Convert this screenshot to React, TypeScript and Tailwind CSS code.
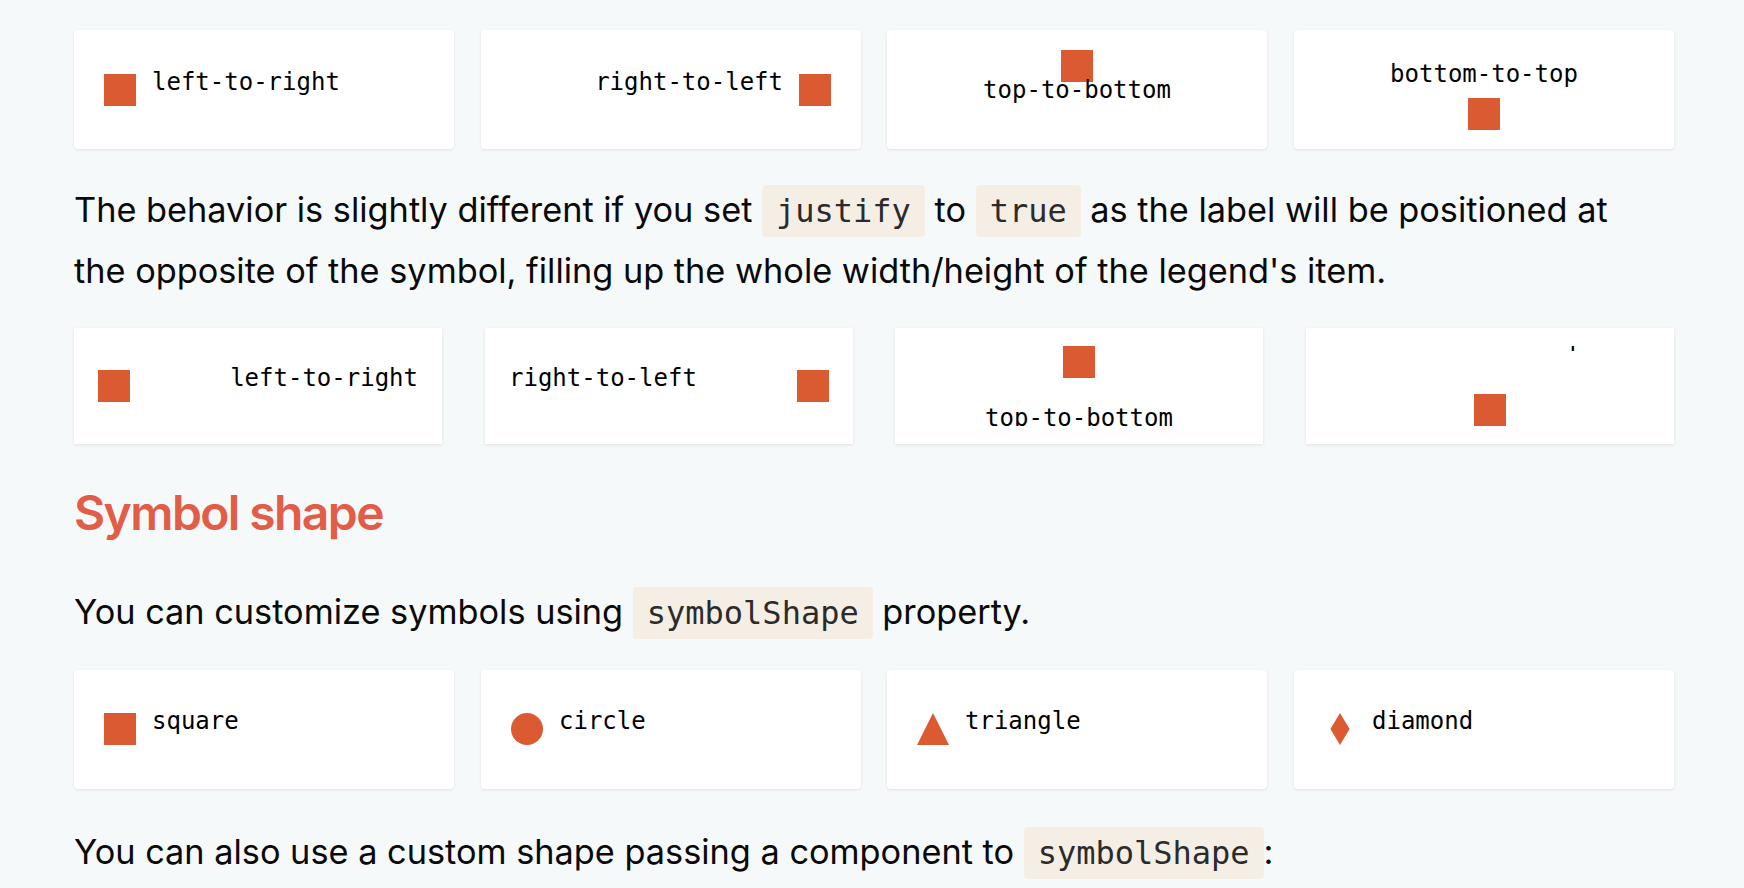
import React from 'react';

const C = '#dc5a32';
const MONO = '"DejaVu Sans Mono", "Liberation Mono", monospace';

type Shape = 'square' | 'circle' | 'triangle' | 'diamond';

function Sym({ shape, x, y }: { shape: Shape; x: number; y: number }) {
  if (shape === 'circle') return <circle cx={x + 16} cy={y + 16} r={16} fill={C} />;
  if (shape === 'triangle')
    return <path d={`M${x + 16} ${y} L${x + 32} ${y + 32} L${x} ${y + 32} Z`} fill={C} />;
  if (shape === 'diamond')
    return (
      <path
        d={`M${x + 16} ${y} L${x + 25.6} ${y + 16} L${x + 16} ${y + 32} L${x + 6.4} ${y + 16} Z`}
        fill={C}
      />
    );
  return <rect x={x} y={y} width={32} height={32} fill={C} />;
}

function Label({
  x,
  y,
  anchor,
  children,
}: {
  x: number;
  y: number;
  anchor: 'start' | 'middle' | 'end';
  children: React.ReactNode;
}) {
  return (
    <text x={x} y={y} textAnchor={anchor} fontSize={24} fontFamily={MONO} fill="#000">
      {children}
    </text>
  );
}

type Demo = {
  label: string;
  dir: 'ltr' | 'rtl' | 'ttb' | 'btt';
  justify?: boolean;
  shape?: Shape;
};

function LegendSvg({ label, dir, justify, shape = 'square' }: Demo) {
  let sym = { x: 0, y: 24 };
  let txt: { x: number; y: number; anchor: 'start' | 'middle' | 'end' } = { x: 48, y: 40, anchor: 'start' };
  if (dir === 'ltr') {
    sym = { x: 0, y: 24 };
    txt = justify ? { x: 320, y: 40, anchor: 'end' } : { x: 48, y: 40, anchor: 'start' };
  } else if (dir === 'rtl') {
    sym = { x: 288, y: 24 };
    txt = justify ? { x: 0, y: 40, anchor: 'start' } : { x: 272, y: 40, anchor: 'end' };
  } else if (dir === 'ttb') {
    sym = { x: 144, y: 0 };
    txt = justify ? { x: 160, y: 80, anchor: 'middle' } : { x: 160, y: 48, anchor: 'middle' };
  } else {
    sym = { x: 144, y: 48 };
    txt = justify ? { x: 160, y: 0, anchor: 'middle' } : { x: 160, y: 32, anchor: 'middle' };
  }
  return (
    <svg width={320} height={80} className="block overflow-hidden">
      <Sym shape={shape} x={sym.x} y={sym.y} />
      <Label x={txt.x} y={txt.y} anchor={txt.anchor}>
        {label}
      </Label>
    </svg>
  );
}

function Code({ children }: { children: React.ReactNode }) {
  return (
    <code
      className="bg-[#f4eee5] rounded-[4px] px-[14px] py-[7px] text-[32px] text-[#2b2b2b]"
      style={{ fontFamily: MONO }}
    >
      {children}
    </code>
  );
}

const row1: Demo[] = [
  { label: 'left-to-right', dir: 'ltr' },
  { label: 'right-to-left', dir: 'rtl' },
  { label: 'top-to-bottom', dir: 'ttb' },
  { label: 'bottom-to-top', dir: 'btt' },
];

const row2: Demo[] = [
  { label: 'left-to-right', dir: 'ltr', justify: true },
  { label: 'right-to-left', dir: 'rtl', justify: true },
  { label: 'top-to-bottom', dir: 'ttb', justify: true },
  { label: 'bottom-to-top', dir: 'btt', justify: true },
];

const row3: Demo[] = [
  { label: 'square', dir: 'ltr', shape: 'square' },
  { label: 'circle', dir: 'ltr', shape: 'circle' },
  { label: 'triangle', dir: 'ltr', shape: 'triangle' },
  { label: 'diamond', dir: 'ltr', shape: 'diamond' },
];

export default function App() {
  return (
    <div
      className="w-[1744px] h-[888px] overflow-hidden bg-[#f6f9fa] pl-[74px] pt-[30px] text-[#0a0a0a]"
      style={{ fontFamily: 'Inter, "Noto Sans", sans-serif' }}
    >
      <div className="w-[1600px]">
        <div className="grid grid-cols-4 gap-x-[26.67px]">
          {row1.map((d) => (
            <div
              key={d.label}
              className="h-[119px] bg-white rounded-[4px] shadow-[0_1px_3px_rgba(0,0,0,0.1)] flex items-center justify-center"
            >
              <LegendSvg {...d} />
            </div>
          ))}
        </div>

        <p className="mt-[31px] text-[34.3px] leading-[59px] whitespace-nowrap">
          The behavior is slightly different if you set <Code>justify</Code> to <Code>true</Code> as the label will
          be positioned at
          <br />
          the opposite of the symbol, filling up the whole width/height of the legend's item.
        </p>

        <div className="mt-[28px] flex justify-between">
          {row2.map((d) => (
            <div
              key={d.label}
              className="w-[368px] h-[116px] bg-white shadow-[0_1px_3px_rgba(0,0,0,0.1)] flex items-center justify-center"
            >
              <LegendSvg {...d} />
            </div>
          ))}
        </div>

        <h2 className="mt-[40px] text-[48px] leading-[57.6px] font-semibold tracking-[-1.6px] text-[#e25d47]">
          Symbol shape
        </h2>

        <p className="mt-[40px] text-[34.3px] leading-[59px]">
          You can customize symbols using <Code>symbolShape</Code> property.
        </p>

        <div className="mt-[27px] grid grid-cols-4 gap-x-[26.67px]">
          {row3.map((d) => (
            <div
              key={d.label}
              className="h-[119px] bg-white rounded-[4px] shadow-[0_1px_3px_rgba(0,0,0,0.1)] flex items-center justify-center"
            >
              <LegendSvg {...d} />
            </div>
          ))}
        </div>

        <p className="mt-[33px] text-[34.3px] leading-[59px]">
          You can also use a custom shape passing a component to <Code>symbolShape</Code>:
        </p>
      </div>
    </div>
  );
}
